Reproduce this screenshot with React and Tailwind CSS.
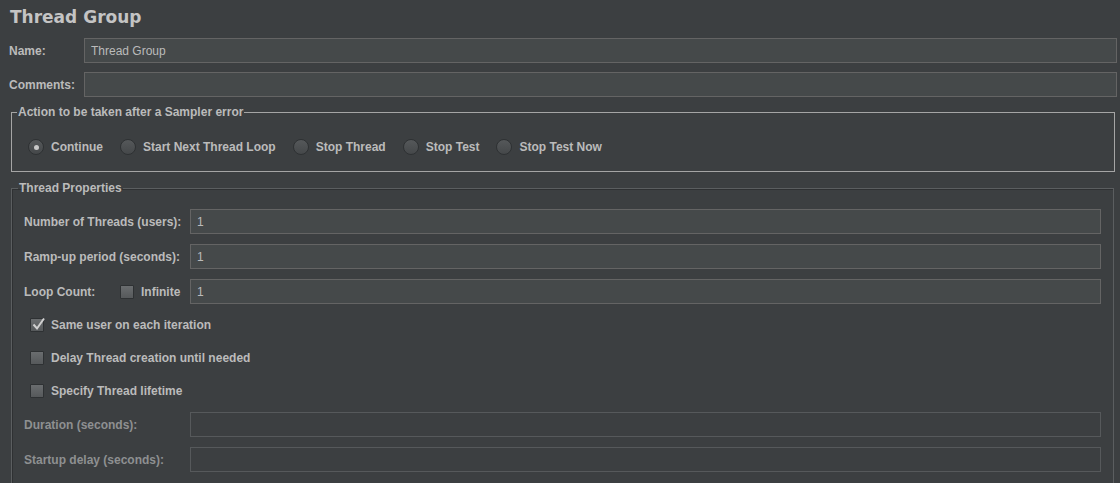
import React, { useState } from "react";

const font = { fontFamily: '"Liberation Sans", Arial, sans-serif' };

function Radio({ checked, label, onClick }) {
  return (
    <label className="flex items-center gap-[7px] cursor-pointer" onClick={onClick}>
      <span className="w-[16px] h-[16px] rounded-full border border-[#2e3133] bg-gradient-to-b from-[#55585a] to-[#45484a] flex items-center justify-center">
        {checked && <span className="w-[5px] h-[5px] rounded-full bg-[#c8c8c8]" />}
      </span>
      <span>{label}</span>
    </label>
  );
}

function Check({ checked, label, className = "" }) {
  return (
    <label className={"flex items-center gap-[7px] " + className}>
      <span className="relative w-[14px] h-[14px] border border-[#2e3133] bg-gradient-to-b from-[#6a6d6f] to-[#56595b] rounded-[1px]">
        {checked && (
          <svg className="absolute -top-[3px] left-[0px]" width="16" height="16" viewBox="0 0 16 16">
            <path d="M2.5 8.5 L6 12.5 L13 2.5" fill="none" stroke="#d0d0d0" strokeWidth="2" />
          </svg>
        )}
      </span>
      <span>{label}</span>
    </label>
  );
}

function Field({ value = "", disabled }) {
  return (
    <input
      readOnly
      value={value}
      className={
        "h-[25px] w-full px-[6px] outline-none text-[12px] font-normal " +
        (disabled
          ? "bg-[#3c3f41] border border-[#56595b]"
          : "bg-[#45494a] border border-[#646464] text-[#bbbbbb]")
      }
      style={font}
    />
  );
}

export default function App() {
  const [action, setAction] = useState("continue");

  const actions = [
    ["continue", "Continue"],
    ["next", "Start Next Thread Loop"],
    ["thread", "Stop Thread"],
    ["test", "Stop Test"],
    ["now", "Stop Test Now"],
  ];

  return (
    <div className="w-[1120px] h-[483px] overflow-hidden bg-[#3c3f41] text-[#bbbbbb] text-[12px] font-bold" style={font}>
      <h1
        className="pl-[10px] pt-[6px] h-[38px] text-[17px] leading-[22px] font-bold text-[#c4c4c4]"
        style={{ fontFamily: '"DejaVu Sans", sans-serif' }}
      >
        Thread Group
      </h1>

      <div className="pl-[9px] pr-[3px] flex flex-col gap-[9px]">
        <div className="flex items-center">
          <span className="w-[75px] shrink-0">Name:</span>
          <Field value="Thread Group" />
        </div>
        <div className="flex items-center">
          <span className="w-[75px] shrink-0">Comments:</span>
          <Field />
        </div>
      </div>

      <fieldset className="mt-[8px] ml-[11px] mr-[5px] h-[67px] border border-[#a5a5a5]">
        <legend className="ml-[5px] px-[1px] leading-[14px]">Action to be taken after a Sampler error</legend>
        <div className="flex items-center gap-[17px] pt-[19px] pl-[16px]">
          {actions.map(([key, label]) => (
            <Radio key={key} checked={action === key} label={label} onClick={() => setAction(key)} />
          ))}
        </div>
      </fieldset>

      <fieldset className="mt-[9px] ml-[11px] mr-[6px] h-[310px] border border-[#5b5e60] shadow-[inset_1px_1px_0_#2f3133]">
        <legend className="ml-[6px] px-[1px] leading-[14px]">Thread Properties</legend>

        <div className="px-[12px]">
          <div className="pt-[14px] flex flex-col gap-[10px]">
            <div className="flex items-center">
              <span className="w-[166px] shrink-0">Number of Threads (users):</span>
              <Field value="1" />
            </div>
            <div className="flex items-center">
              <span className="w-[166px] shrink-0">Ramp-up period (seconds):</span>
              <Field value="1" />
            </div>
            <div className="flex items-center">
              <span className="w-[96px] shrink-0">Loop Count:</span>
              <Check label="Infinite" className="w-[70px] shrink-0 gap-[6px]" />
              <Field value="1" />
            </div>
          </div>

          <div className="pl-[6px] pt-[4px] flex flex-col">
            <div className="h-[33px] flex items-center">
              <Check checked label="Same user on each iteration" />
            </div>
            <div className="h-[33px] flex items-center">
              <Check label="Delay Thread creation until needed" />
            </div>
            <div className="h-[33px] flex items-center">
              <Check label="Specify Thread lifetime" />
            </div>
          </div>

          <div className="pt-[5px] flex flex-col gap-[10px] text-[#8e9091]">
            <div className="flex items-center">
              <span className="w-[166px] shrink-0">Duration (seconds):</span>
              <Field disabled />
            </div>
            <div className="flex items-center">
              <span className="w-[166px] shrink-0">Startup delay (seconds):</span>
              <Field disabled />
            </div>
          </div>
        </div>
      </fieldset>
    </div>
  );
}
